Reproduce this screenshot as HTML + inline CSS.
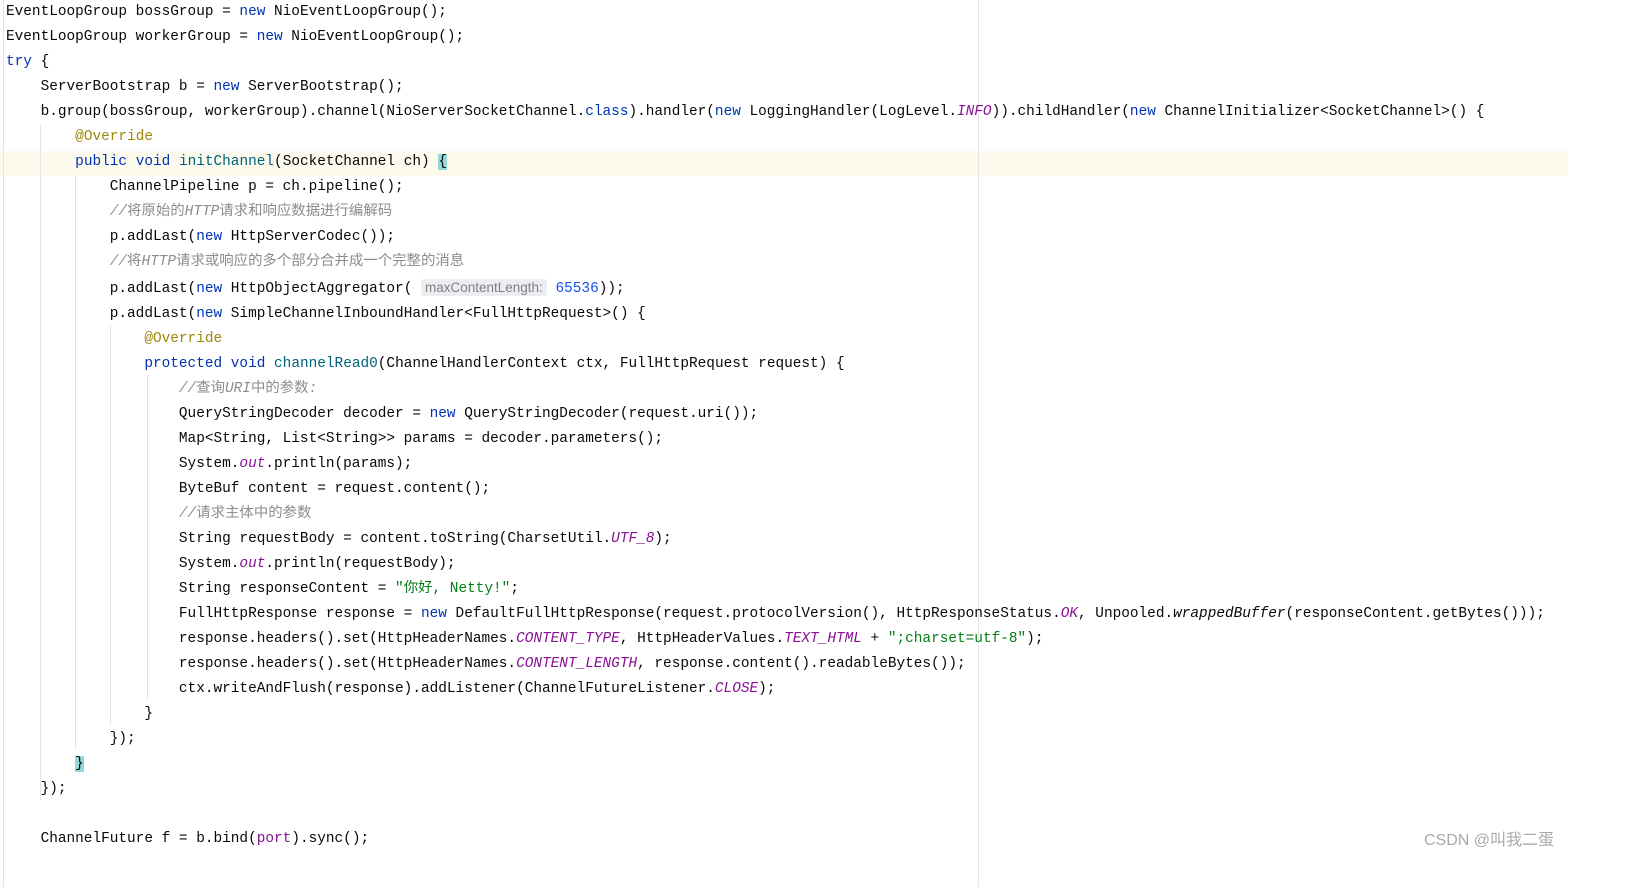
<!DOCTYPE html>
<html><head><meta charset="utf-8"><style>
html,body{margin:0;padding:0;background:#fff;width:1627px;height:887px;overflow:hidden;position:relative}
pre{margin:0;position:absolute;left:6px;top:0;font-family:"Liberation Mono","Noto Sans CJK SC",monospace;font-size:14.42px;line-height:25px;color:#080808;white-space:pre}
.k{color:#0033b3}.m{color:#00627a}.a{color:#9e880d}.s{color:#067d17}.f{color:#871094;font-style:italic}.n{color:#1750eb}.i{font-style:italic}
.c{color:#8c8c8c;font-style:italic}
.c u{font-style:normal;text-decoration:none}
.h{background:#ebedf0;color:#808080;font-family:"Liberation Sans",sans-serif;font-size:13.5px;border-radius:3px;padding:1px 4px}
.b{background:#93d9d9}
.g{position:absolute;width:1px;background:#e4e4e4}
.hl{position:absolute;left:0;top:151px;width:1568px;height:25px;background:#fcfaed}
.wm{position:absolute;left:1424px;top:826px;font-family:"Liberation Sans","Noto Sans CJK SC",sans-serif;font-size:16px;color:#aaa}
</style></head><body>
<div class="hl"></div>
<div class="g" style="left:3px;top:0;height:887px"></div>
<div class="g" style="left:978px;top:0;height:887px"></div>
<div class="g" style="left:40px;top:125px;height:675px"></div>
<div class="g" style="left:75px;top:175px;height:575px"></div>
<div class="g" style="left:110px;top:325px;height:400px"></div>
<div class="g" style="left:147px;top:375px;height:325px"></div>
<pre>EventLoopGroup bossGroup = <span class="k">new</span> NioEventLoopGroup();
EventLoopGroup workerGroup = <span class="k">new</span> NioEventLoopGroup();
<span class="k">try</span> {
    ServerBootstrap b = <span class="k">new</span> ServerBootstrap();
    b.group(bossGroup, workerGroup).channel(NioServerSocketChannel.<span class="k">class</span>).handler(<span class="k">new</span> LoggingHandler(LogLevel.<span class="f">INFO</span>)).childHandler(<span class="k">new</span> ChannelInitializer&lt;SocketChannel&gt;() {
        <span class="a">@Override</span>
        <span class="k">public void</span> <span class="m">initChannel</span>(SocketChannel ch) <span class="b">{</span>
            ChannelPipeline p = ch.pipeline();
            <span class="c">//<u>将原始的</u>HTTP<u>请求和响应数据进行编解码</u></span>
            p.addLast(<span class="k">new</span> HttpServerCodec());
            <span class="c">//<u>将</u>HTTP<u>请求或响应的多个部分合并成一个完整的消息</u></span>
            p.addLast(<span class="k">new</span> HttpObjectAggregator( <span class="h">maxContentLength:</span> <span class="n">65536</span>));
            p.addLast(<span class="k">new</span> SimpleChannelInboundHandler&lt;FullHttpRequest&gt;() {
                <span class="a">@Override</span>
                <span class="k">protected void</span> <span class="m">channelRead0</span>(ChannelHandlerContext ctx, FullHttpRequest request) {
                    <span class="c">//<u>查询</u>URI<u>中的参数</u>:</span>
                    QueryStringDecoder decoder = <span class="k">new</span> QueryStringDecoder(request.uri());
                    Map&lt;String, List&lt;String&gt;&gt; params = decoder.parameters();
                    System.<span class="f">out</span>.println(params);
                    ByteBuf content = request.content();
                    <span class="c">//<u>请求主体中的参数</u></span>
                    String requestBody = content.toString(CharsetUtil.<span class="f">UTF_8</span>);
                    System.<span class="f">out</span>.println(requestBody);
                    String responseContent = <span class="s">"你好, Netty!"</span>;
                    FullHttpResponse response = <span class="k">new</span> DefaultFullHttpResponse(request.protocolVersion(), HttpResponseStatus.<span class="f">OK</span>, Unpooled.<span class="i">wrappedBuffer</span>(responseContent.getBytes()));
                    response.headers().set(HttpHeaderNames.<span class="f">CONTENT_TYPE</span>, HttpHeaderValues.<span class="f">TEXT_HTML</span> + <span class="s">";charset=utf-8"</span>);
                    response.headers().set(HttpHeaderNames.<span class="f">CONTENT_LENGTH</span>, response.content().readableBytes());
                    ctx.writeAndFlush(response).addListener(ChannelFutureListener.<span class="f">CLOSE</span>);
                }
            });
        <span class="b">}</span>
    });

    ChannelFuture f = b.bind(<span style="color:#871094">port</span>).sync();</pre>
<div class="wm">CSDN @叫我二蛋</div>
</body></html>
